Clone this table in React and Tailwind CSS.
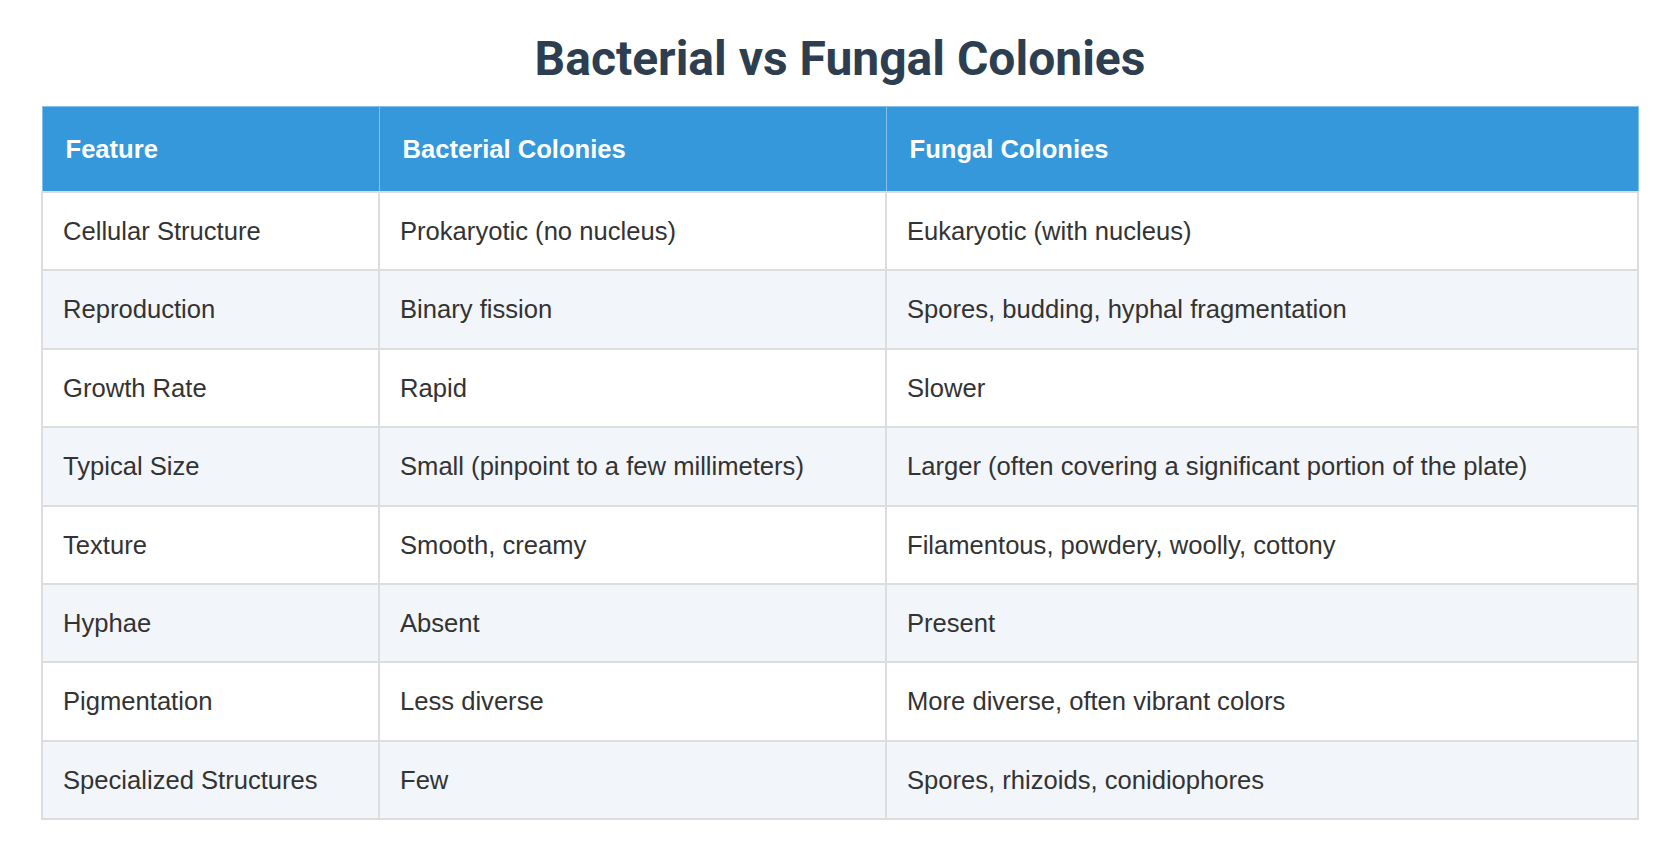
const rows = [
  ["Cellular Structure", "Prokaryotic (no nucleus)", "Eukaryotic (with nucleus)"],
  ["Reproduction", "Binary fission", "Spores, budding, hyphal fragmentation"],
  ["Growth Rate", "Rapid", "Slower"],
  ["Typical Size", "Small (pinpoint to a few millimeters)", "Larger (often covering a significant portion of the plate)"],
  ["Texture", "Smooth, creamy", "Filamentous, powdery, woolly, cottony"],
  ["Hyphae", "Absent", "Present"],
  ["Pigmentation", "Less diverse", "More diverse, often vibrant colors"],
  ["Specialized Structures", "Few", "Spores, rhizoids, conidiophores"],
];

const App = () => {
  return (
    <div className="min-h-screen bg-white px-[41px] pt-[32px] font-['Liberation_Sans',Arial,sans-serif]">
      <h1 className="text-center font-['Roboto',sans-serif] font-bold text-[48px] leading-[54px] text-[#2c3e50] mb-[20px]">
        Bacterial vs Fungal Colonies
      </h1>
      <table className="w-full border-collapse text-[25.6px]">
        <thead>
          <tr className="bg-[#3498db] text-white">
            <th className="w-[337px] border border-[#85bfeb] text-left font-bold px-[23px] py-[23px] leading-[38px]">
              Feature
            </th>
            <th className="w-[507px] border border-[#85bfeb] text-left font-bold px-[23px] py-[23px] leading-[38px]">
              Bacterial Colonies
            </th>
            <th className="border border-[#85bfeb] text-left font-bold px-[23px] py-[23px] leading-[38px]">
              Fungal Colonies
            </th>
          </tr>
        </thead>
        <tbody>
          {rows.map((row, i) => (
            <tr key={i} className={i % 2 === 1 ? "bg-[#f2f5f9]" : "bg-white"}>
              {row.map((cell, j) => (
                <td
                  key={j}
                  className="border-2 border-[#dddddd] text-[#333333] px-[20px] py-[19px] leading-[38.4px]"
                >
                  {cell}
                </td>
              ))}
            </tr>
          ))}
        </tbody>
      </table>
    </div>
  );
};

export default App;
